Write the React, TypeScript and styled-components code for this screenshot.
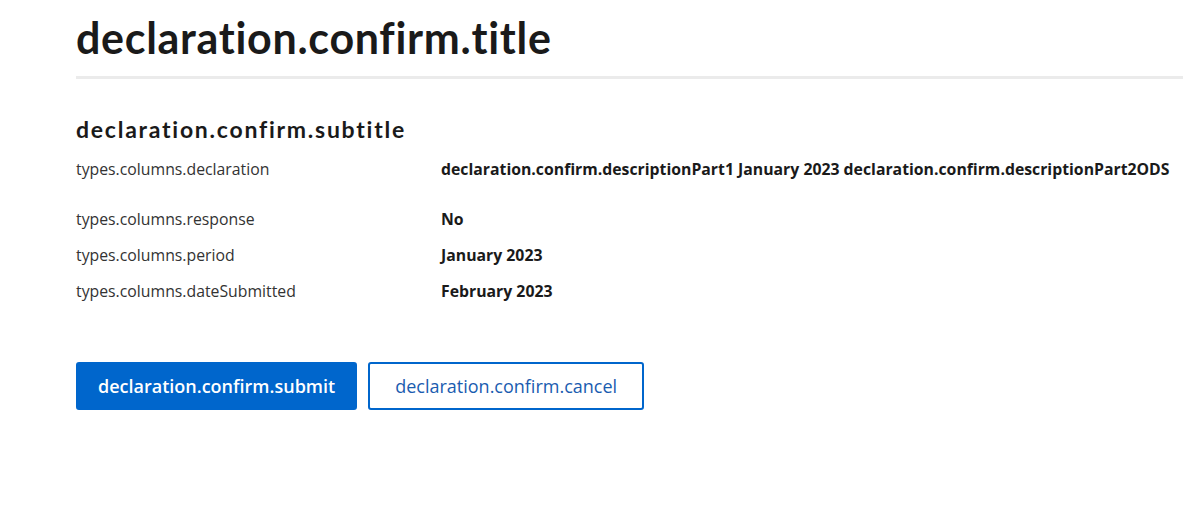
import React from "react";
import styled, { createGlobalStyle } from "styled-components";

const GlobalStyle = createGlobalStyle`
  body {
    margin: 0;
    background: #ffffff;
    font-family: "Open Sans", "Liberation Sans", sans-serif;
    color: #1a1a1a;
  }
`;

const rows = [
  {
    label: "types.columns.declaration",
    value:
      "declaration.confirm.descriptionPart1 January 2023 declaration.confirm.descriptionPart2ODS",
    spaced: true,
  },
  { label: "types.columns.response", value: "No" },
  { label: "types.columns.period", value: "January 2023" },
  { label: "types.columns.dateSubmitted", value: "February 2023" },
];

const App = () => {
  return (
    <>
      <GlobalStyle />
      <Page>
        <Title>declaration.confirm.title</Title>
        <Divider />
        <Subtitle>declaration.confirm.subtitle</Subtitle>
        <Details>
          {rows.map((row) => (
            <Row key={row.label} $spaced={row.spaced}>
              <Label>{row.label}</Label>
              <Value>{row.value}</Value>
            </Row>
          ))}
        </Details>
        <Actions>
          <PrimaryButton>declaration.confirm.submit</PrimaryButton>
          <SecondaryButton>declaration.confirm.cancel</SecondaryButton>
        </Actions>
      </Page>
    </>
  );
};

export default App;

const Page = styled.div`
  margin: 0 17px 0 76px;
  padding-top: 14px;
`;

const Title = styled.h1`
  font-family: "Lato", "Liberation Sans", sans-serif;
  font-weight: 700;
  font-size: 43px;
  line-height: 48px;
  margin: 0;
  color: #1a1a1a;
  letter-spacing: 0.7px;
`;

const Divider = styled.hr`
  border: none;
  height: 3px;
  background: #ebebeb;
  margin: 14px 0 0 0;
`;

const Subtitle = styled.h2`
  font-family: "Lato", "Liberation Sans", sans-serif;
  font-weight: 700;
  font-size: 23px;
  line-height: 28px;
  margin: 36px 0 0 0;
  color: #1a1a1a;
  letter-spacing: 1.75px;
`;

const Details = styled.div`
  display: flex;
  flex-direction: column;
  margin-top: 12px;
`;

const Row = styled.div<{ $spaced?: boolean }>`
  display: grid;
  grid-template-columns: 365px 1fr;
  font-size: 15.8px;
  line-height: 22px;
  padding: 3px 0 ${(p) => (p.$spaced ? "25px" : "11px")} 0;
`;

const Label = styled.div`
  color: #333333;
`;

const Value = styled.div`
  font-weight: 700;
  color: #1a1a1a;
`;

const Actions = styled.div`
  display: flex;
  gap: 11px;
  margin-top: 49px;
`;

const PrimaryButton = styled.button`
  font-family: "Open Sans", "Liberation Sans", sans-serif;
  font-size: 18px;
  font-weight: 600;
  height: 48px;
  padding: 0 20px;
  border-radius: 3px;
  border: 2px solid #0066cc;
  background: #0066cc;
  color: #ffffff;
`;

const SecondaryButton = styled(PrimaryButton)`
  background: #ffffff;
  color: #1a5cb0;
  font-weight: 500;
  padding: 0 25px;
`;
